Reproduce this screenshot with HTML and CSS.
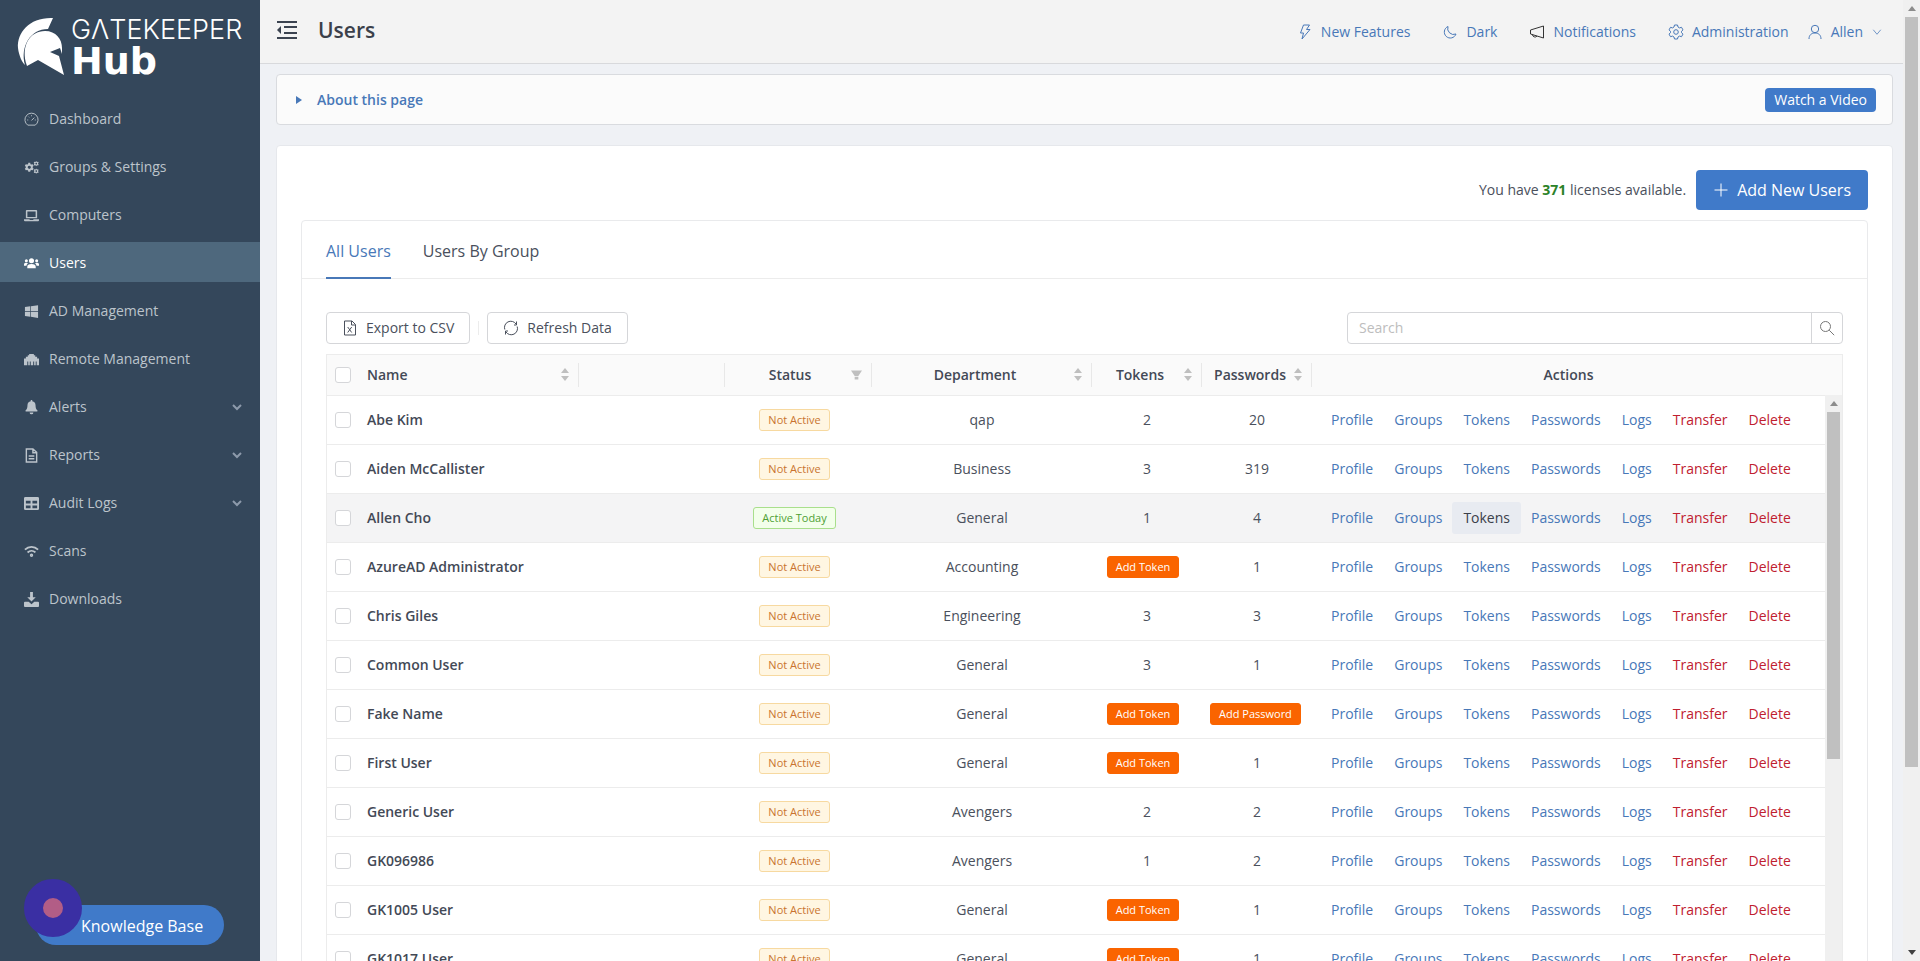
FILE: index.html
```html
<!DOCTYPE html>
<html lang="en">
<head>
    <meta charset="UTF-8">
    <meta name="viewport" content="width=device-width, initial-scale=1.0">
    <title>Users - GateKeeper Hub</title>
    <link rel="stylesheet" href="styles.css">
</head>
<body>
    <aside class="sidebar">
        <a href="#" class="logo" aria-label="GateKeeper Hub">
            <svg width="230" height="70" viewBox="0 0 230 70">
                <path fill="#fff" d="M35 0C12-1-1 14 0 30c1 8 4 14 7 17C2 29 12 11 30 11z"/>
                <path fill="#fff" d="M9 48C2 28 12 13 27 13c11 0 17 8 17 17v6l-2-6-10 4 9 4 5 19-26-15z"/>
                <text x="53" y="21" class="logo-top">GΛTEKEEPER</text>
                <text x="53" y="56" class="logo-bottom">Hub</text>
            </svg>
        </a>
        <nav>
            <ul class="menu">
                <li><a href="#"><svg viewBox="0 0 16 16" class="line"><path d="M4 14a7 7 0 1 1 8 0zM8 9l3-3M3.500 8.500h1M11.500 8.500h1M8 3.500v1M4.800 5l.7.7"/></svg>Dashboard</a></li>
                <li><a href="#"><svg viewBox="0 0 16 16"><path fill-rule="evenodd" d="M4.600 3h2l.3 1.400 1 .5L9.300 4.500l1 1.600-1 1v1.200l1 1-1 1.700-1.400-.4-1 .5-.3 1.500h-2l-.3-1.500-1-.5-1.400.4-1-1.700 1-1V7.100l-1-1 1-1.600 1.400.4 1-.5zM5.600 6.100a1.700 1.700 0 1 0 .1 0zM13 1l.8 1 1.300-.2.5 1-.8 1 .8 1-.5 1-1.300-.2-.8 1-.8-1-1.300.2-.5-1 .8-1-.8-1 .5-1 1.300.2zM13 3a.8.8 0 1 0 .1 0zM13 9l.8 1 1.300-.2.5 1-.8 1 .8 1-.5 1-1.300-.2-.8 1-.8-1-1.300.2-.5-1 .8-1-.8-1 .5-1 1.300.2zM13 11a.8.8 0 1 0 .1 0z"/></svg>Groups &amp; Settings</a></li>
                <li><a href="#"><svg viewBox="0 0 16 16"><path fill-rule="evenodd" d="M3 2h10a1 1 0 0 1 1 1v8H2V3a1 1 0 0 1 1-1zm.6 1.600v5.900h8.800V3.600zM0 12h6v.7h4V12h6v1a1 1 0 0 1-1 1H1a1 1 0 0 1-1-1z"/></svg>Computers</a></li>
                <li class="active"><a href="#"><svg viewBox="0 0 16 16"><circle cx="8" cy="5" r="2.700"/><circle cx="2.500" cy="5" r="1.600"/><circle cx="13.500" cy="5" r="1.600"/><path d="M3.500 13v-1.500C3.500 9.500 5 8.500 8 8.500s4.500 1 4.500 3V13zM0 10.500V9c0-1.200 1-1.700 2.500-1.700.8 0 1.400.2 1.700.5C3.200 8.600 2.700 9.500 2.600 10.500zM16 10.500V9c0-1.200-1-1.700-2.500-1.700-.8 0-1.400.2-1.700.5 1 .8 1.500 1.700 1.600 2.700z"/></svg>Users</a></li>
                <li><a href="#"><svg viewBox="0 0 16 16"><path d="M1 3.200l5.700-.8v5.200H1zM7.400 2.300L15 1.200v6.400H7.400zM1 8.400h5.700v5.200L1 12.800zM7.400 8.400H15v6.400l-7.600-1.100z"/></svg>AD Management</a></li>
                <li><a href="#"><svg viewBox="0 0 16 16"><path d="M0 14V7h2V5h2V3.500h1.500V2h5v1.500H12V5h2v2h2v7h-2.500v-4h-1v4h-1.700v-4h-1v4H7.200v-4h-1v4H4.500v-4h-1v4z"/></svg>Remote Management</a></li>
                <li><a href="#"><svg viewBox="0 0 16 16"><path d="M7.200 0h1.600v1.200C11 1.600 12.300 3.200 12.300 5.500c0 3 .7 4.300 1.900 5.300.5.500.2 1.400-.5 1.400H2.300c-.7 0-1-.9-.5-1.400 1.200-1 1.900-2.300 1.900-5.300C3.700 3.200 5 1.600 7.200 1.200zM6 13.300h4a2 2 0 0 1-4 0z"/></svg>Alerts<svg viewBox="0 0 12 12" class="chevron"><path d="M2 4l4 4 4-4"/></svg></a></li>
                <li><a href="#"><svg viewBox="0 0 16 16" class="line bold"><path d="M3.500 1h6L13.500 4.500V15h-11V1zM9.500 1v4h4M5 8.500h6M5 11.500h6"/></svg>Reports<svg viewBox="0 0 12 12" class="chevron"><path d="M2 4l4 4 4-4"/></svg></a></li>
                <li><a href="#"><svg viewBox="0 0 16 16"><path fill-rule="evenodd" d="M1.500 1h13A1.500 1.500 0 0 1 16 2.500v11a1.500 1.500 0 0 1-1.500 1.500h-13A1.500 1.500 0 0 1 0 13.500v-11A1.500 1.500 0 0 1 1.500 1zM2 5v3h5V5zm7 0v3h5V5zM2 10v3h5v-3zm7 0v3h5v-3z"/></svg>Audit Logs<svg viewBox="0 0 12 12" class="chevron"><path d="M2 4l4 4 4-4"/></svg></a></li>
                <li><a href="#"><svg viewBox="0 0 16 16" class="line heavy"><path d="M1 6c4-4 10-4 14 0M3.800 9c2.500-2.300 6-2.300 8.400 0"/><circle cx="8" cy="12" r=".8"/></svg>Scans</a></li>
                <li><a href="#"><svg viewBox="0 0 16 16"><path d="M6.500 0h3v5.500h3L8 10 3.500 5.500h3zM1 10.500h4L8 13l3-2.500h4a1 1 0 0 1 1 1V15a1 1 0 0 1-1 1H1a1 1 0 0 1-1-1v-3.500a1 1 0 0 1 1-1z"/></svg>Downloads</a></li>
            </ul>
        </nav>
        <div class="help">
            <button type="button" class="help-btn">Knowledge Base</button>
            <span class="help-beacon"></span>
        </div>
    </aside>

    <div class="main">
        <header class="topbar">
            <button type="button" class="collapse" aria-label="Collapse menu">
                <svg width="22" height="20" viewBox="0 0 22 20"><path stroke="#3b4350" stroke-width="2" d="M1 2h20M8 7h13M8 13h13M1 18h20"/><path fill="#3b4350" d="M5 6v8L1 10z"/></svg>
            </button>
            <h1>Users</h1>
            <div class="top-links">
                <a href="#"><svg viewBox="0 0 16 16" class="line"><path d="M6.500 1h6L9.500 5.500H13L5 15l1.500-6H3.500z"/></svg>New Features</a>
                <a href="#"><svg viewBox="0 0 16 16" class="line"><path d="M6 2.500a6 6 0 1 0 8 7.500A6 6 0 0 1 6 2.500z"/></svg>Dark</a>
                <a href="#"><svg viewBox="0 0 16 16" class="line dark"><path d="M1.500 6L14.500 2v12L1.500 10zM3.500 10.500a2.500 2.500 0 0 0 4.500 1.500"/></svg>Notifications</a>
                <a href="#"><svg viewBox="0 0 16 16" class="line"><path d="M6.500 1h3l.5 2 1.500.9 2-.6 1.500 2.600L13.500 7.300v1.400l1.500 1.400-1.500 2.600-2-.6-1.500.9-.5 2h-3L6 13l-1.500-.9-2 .6L1 10.100l1.500-1.400V7.300L1 5.900l1.500-2.600 2 .6L6 3z"/><circle cx="8" cy="8" r="2.300"/></svg>Administration</a>
                <a href="#" class="account"><svg viewBox="0 0 16 16" class="line"><circle cx="8" cy="5" r="3.700"/><path d="M2 15c0-4 2.500-6 6-6s6 2 6 6"/></svg>Allen<svg viewBox="0 0 16 16" class="line caret"><path d="M3 5l5 6 5-6"/></svg></a>
            </div>
        </header>

        <section class="about">
            <a href="#" class="about-link"><span class="triangle"></span>About this page</a>
            <button type="button" class="btn-video">Watch a Video</button>
        </section>

        <main class="card">
            <div class="licenses">
                <span>You have <strong>371</strong> licenses available.</span>
                <button type="button" class="btn-add"><svg viewBox="0 0 16 16" class="line"><path d="M8 1.500v13M1.500 8h13"/></svg>Add New Users</button>
            </div>
            <div class="panel">
                <div class="tabs">
                    <a href="#" class="tab active">All Users</a>
                    <a href="#" class="tab">Users By Group</a>
                </div>
                <div class="panel-body">
                    <div class="toolbar">
                        <button type="button" class="btn"><svg viewBox="0 0 16 16" class="line"><path d="M2.500 1h7.500l3.500 3.500V15h-11zM9.500 1v4h4M5.700 7l4 5.500M9.700 7l-4 5.500"/></svg>Export to CSV</button>
                        <span class="divider"></span>
                        <button type="button" class="btn"><svg viewBox="0 0 16 16" class="line"><path d="M1.800 9.500A6.300 6.300 0 0 1 13 4M14.200 6.500A6.300 6.300 0 0 1 3 12M13.500 1.500V5H11M2.500 14.500V11H5"/></svg>Refresh Data</button>
                        <div class="search">
                            <input type="text" placeholder="Search" aria-label="Search">
                            <button type="button" aria-label="Run search"><svg viewBox="0 0 16 16" class="line"><circle cx="6.500" cy="6.500" r="5"/><path d="M10.200 10.200l5 5"/></svg></button>
                        </div>
                    </div>
                    <div class="table-wrap">
                        <table>
                            <colgroup>
                                <col class="col-check"><col class="col-name"><col class="col-blank"><col class="col-status"><col class="col-dept"><col class="col-num"><col class="col-num"><col class="col-actions"><col class="col-scroll">
                            </colgroup>
                            <thead>
                                <tr>
                                    <th><input type="checkbox" aria-label="Select all"></th>
                                    <th class="name"><div class="head">Name<i class="sorter"></i></div></th>
                                    <th></th>
                                    <th><div class="head">Status<svg viewBox="0 0 12 12" class="filter"><path d="M0 1h12L8 7H4zM4 8h4v3H4z"/></svg></div></th>
                                    <th><div class="head">Department<i class="sorter"></i></div></th>
                                    <th><div class="head">Tokens<i class="sorter"></i></div></th>
                                    <th><div class="head">Passwords<i class="sorter"></i></div></th>
                                    <th>Actions</th>
                                    <th></th>
                                </tr>
                            </thead>
                            <tbody id="users"></tbody>
                        </table>
                        <div class="scrollbar inner"><span class="up"></span><span class="thumb"></span></div>
                    </div>
                </div>
            </div>
        </main>
    </div>
    <div class="scrollbar page"><span class="up"></span><span class="thumb"></span><span class="down"></span></div>

    <script src="users.js"></script>
</body>
</html>
```
FILE: users.js
```js
// name, department, tokens, passwords
const users = [
    ['Abe Kim', 'qap', 2, 20],
    ['Aiden McCallister', 'Business', 3, 319],
    ['Allen Cho', 'General', 1, 4],
    ['AzureAD Administrator', 'Accounting', 0, 1],
    ['Chris Giles', 'Engineering', 3, 3],
    ['Common User', 'General', 3, 1],
    ['Fake Name', 'General', 0, 0],
    ['First User', 'General', 0, 1],
    ['Generic User', 'Avengers', 2, 2],
    ['GK096986', 'Avengers', 1, 2],
    ['GK1005 User', 'General', 0, 1],
    ['GK1017 User', 'General', 0, 1]
];
const actions = ['Profile', 'Groups', 'Tokens', 'Passwords', 'Logs', 'Transfer', 'Delete'];
const hovered = 'Allen Cho';

document.getElementById('users').innerHTML = users.map(([name, dept, tokens, passwords]) => {
    const active = name === hovered;
    const links = actions.map(action => {
        const danger = action === 'Transfer' || action === 'Delete' ? ' danger' : '';
        const hover = active && action === 'Tokens' ? ' hover' : '';
        return `<button type="button" class="action${danger}${hover}">${action}</button>`;
    }).join('');

    return `<tr class="${active ? 'hover' : ''}">
        <td><input type="checkbox" aria-label="Select ${name}"></td>
        <td class="name">${name}</td>
        <td></td>
        <td><span class="tag ${active ? 'green' : 'gold'}">${active ? 'Active Today' : 'Not Active'}</span></td>
        <td>${dept}</td>
        <td>${tokens || '<button type="button" class="tag orange">Add Token</button>'}</td>
        <td>${passwords || '<button type="button" class="tag orange">Add Password</button>'}</td>
        <td><div class="actions">${links}</div></td>
        <td></td>
    </tr>`;
}).join('');
```
FILE: styles.css
```css
* {
    margin: 0;
    padding: 0;
    box-sizing: border-box;
}

body {
    font-family: 'Open Sans', 'Noto Sans', sans-serif;
    font-size: 14px;
    line-height: 22px;
    color: #4a505c;
    background: #eff1f5;
    display: flex;
    height: 100vh;
    overflow: hidden;
}

a {
    color: #4878b8;
    text-decoration: none;
}

button,
input {
    font: inherit;
    color: inherit;
}

button {
    border: none;
    background: none;
    cursor: pointer;
    white-space: nowrap;
}

svg {
    flex: none;
    fill: currentColor;
}

svg.line {
    fill: none;
    stroke: currentColor;
    stroke-width: 1;
}

svg.bold {
    stroke-width: 1.5;
}

svg.heavy {
    stroke-width: 2;
}

/* Sidebar */
.sidebar {
    position: relative;
    flex: none;
    width: 260px;
    background: #34475b;
}

.logo {
    display: block;
    height: 98px;
    padding: 18px 0 0 18px;
}

.logo svg {
    overflow: visible;
}

.logo-top {
    font-family: Inter, sans-serif;
    font-size: 27px;
    font-weight: 300;
    fill: #fff;
}

.logo-bottom {
    font-family: 'DejaVu Sans', sans-serif;
    font-size: 38px;
    font-weight: 700;
    fill: #fff;
}

.menu {
    list-style: none;
}

.menu li {
    margin-bottom: 8px;
}

.menu a {
    display: flex;
    align-items: center;
    gap: 10px;
    height: 40px;
    padding: 2px 17px 0 24px;
    color: #bcc4cb;
}

.menu svg {
    width: 15px;
    height: 15px;
}

.menu .active a {
    background: #4e687d;
    color: #fff;
}

.menu .chevron {
    width: 12px;
    height: 12px;
    margin-left: auto;
    fill: none;
    stroke: #8d9aab;
    stroke-width: 2;
}

.help {
    position: absolute;
    left: 24px;
    bottom: 16px;
}

.help-btn {
    height: 40px;
    margin-left: 12px;
    padding: 2px 21px 0 45px;
    border-radius: 20px;
    background: #407ac9;
    color: #fff;
    font-size: 16px;
}

.help-beacon {
    position: absolute;
    left: 0;
    bottom: 8px;
    width: 58px;
    height: 58px;
    border: 19px solid #3a2fa3;
    border-radius: 50%;
    background: #b25d86;
}

/* Top bar */
.main {
    flex: 1;
    min-width: 0;
    overflow: hidden;
}

.topbar {
    display: flex;
    align-items: center;
    height: 64px;
    padding: 0 20px 4px 16px;
    background: #f3f3f3;
    border-bottom: 1px solid #d8d9dc;
}

.collapse {
    display: flex;
    margin-right: 20px;
}

.topbar h1 {
    font-size: 21px;
    font-weight: 600;
    color: #3b404a;
}

.top-links {
    display: flex;
    gap: 32px;
    margin-left: auto;
    padding-top: 4px;
}

.top-links a {
    display: flex;
    align-items: center;
    gap: 8px;
}

.top-links svg {
    width: 16px;
    height: 16px;
}

.top-links .account {
    margin-left: -14px;
}

.top-links .caret {
    width: 12px;
    height: 12px;
}

.top-links .dark {
    color: #333;
}

/* About banner */
.about {
    display: flex;
    align-items: center;
    justify-content: space-between;
    height: 51px;
    margin: 10px 10px 20px 16px;
    padding: 0 16px 0 19px;
    background: #fbfbfb;
    border: 1px solid #d9dbdf;
    border-radius: 4px;
}

.about-link {
    display: flex;
    align-items: center;
    gap: 15px;
    font-weight: 600;
}

.triangle {
    border: 4px solid transparent;
    border-left: 6px solid #4878b8;
    border-right: 0;
}

.btn-video {
    height: 24px;
    padding: 0 9px;
    border-radius: 4px;
    background: #407ac9;
    color: #fff;
}

/* Users card */
.card {
    margin: 0 10px 0 16px;
    padding: 24px;
    background: #fff;
    border: 1px solid #e6e8ec;
    border-radius: 4px;
}

.licenses {
    display: flex;
    align-items: center;
    justify-content: flex-end;
    gap: 10px;
    margin-bottom: 10px;
}

.licenses strong {
    color: #2b8228;
}

.btn-add {
    display: flex;
    align-items: center;
    gap: 8px;
    height: 40px;
    padding: 0 17px;
    border-radius: 4px;
    background: #407ac9;
    color: #fff;
    font-size: 16px;
}

.btn-add svg {
    width: 16px;
    height: 16px;
}

.panel {
    border: 1px solid #e9eaec;
    border-radius: 4px;
}

.tabs {
    display: flex;
    gap: 32px;
    height: 58px;
    padding: 0 24px;
    border-bottom: 1px solid #ececec;
}

.tab {
    height: 58px;
    padding-top: 19px;
    color: #4a505c;
    font-size: 16px;
}

.tab.active {
    color: #4878b8;
    border-bottom: 2px solid #4878b8;
}

.panel-body {
    padding: 33px 24px 24px;
}

.toolbar {
    display: flex;
    align-items: center;
    margin-bottom: 10px;
}

.btn {
    display: flex;
    align-items: center;
    gap: 8px;
    height: 32px;
    padding: 0 15px;
    border: 1px solid #d5d6d9;
    border-radius: 4px;
    background: #fff;
}

.btn svg {
    width: 16px;
    height: 16px;
}

.divider {
    width: 1px;
    height: 14px;
    margin: 0 8px;
    background: #ececec;
}

.search {
    display: flex;
    width: 496px;
    height: 32px;
    margin-left: auto;
    border: 1px solid #d5d6d9;
    border-radius: 4px;
}

.search input {
    flex: 1;
    padding: 0 11px;
    border: none;
    background: none;
    outline: none;
}

.search input::placeholder {
    color: #bdbdbd;
}

.search button {
    display: flex;
    align-items: center;
    justify-content: center;
    width: 31px;
    border-left: 1px solid #d5d6d9;
    color: #777;
}

.search svg {
    width: 16px;
    height: 16px;
}

/* Table */
.table-wrap {
    position: relative;
    border: 1px solid #ececec;
    border-bottom: none;
}

table {
    width: 100%;
    table-layout: fixed;
    border-collapse: collapse;
}

.col-check {
    width: 32px;
}

.col-blank {
    width: 146px;
}

.col-status {
    width: 147px;
}

.col-dept {
    width: 220px;
}

.col-num {
    width: 110px;
}

.col-actions {
    width: 513px;
}

.col-scroll {
    width: 17px;
}

th,
td {
    padding: 0 8px;
    border-bottom: 1px solid #ececec;
    text-align: center;
    white-space: nowrap;
}

th {
    position: relative;
    height: 40px;
    background: #fafafa;
    color: #434956;
    font-weight: 600;
}

th:nth-child(n+2):nth-child(-n+7) {
    padding-right: 10px;
}

th:nth-child(n+2):nth-child(-n+7)::after {
    content: '';
    position: absolute;
    top: 8px;
    right: 0;
    width: 1px;
    height: 24px;
    background: #e8e8e8;
}

td {
    height: 49px;
}

td.name {
    color: #434956;
    font-weight: 600;
}

.name {
    text-align: left;
}

th:first-child,
td:first-child,
th:last-child,
td:last-child {
    padding: 0;
}

tr.hover td {
    background: #f4f4f5;
}

.head {
    display: flex;
    align-items: center;
    justify-content: center;
}

.name .head {
    justify-content: space-between;
}

.head .sorter,
.head .filter {
    margin-left: auto;
    padding-left: 4px;
}

th:not(.name) .head::before {
    content: '';
    margin-right: auto;
}

.sorter {
    display: flex;
    flex-direction: column;
    gap: 3px;
}

.sorter::before,
.sorter::after {
    content: '';
    border: 4px solid transparent;
}

.sorter::before {
    border-bottom: 5px solid #bfbfbf;
    border-top: 0;
}

.sorter::after {
    border-top: 5px solid #bfbfbf;
    border-bottom: 0;
}

.filter {
    width: 15px;
    height: 12px;
    fill: #bfbfbf;
}

input[type="checkbox"] {
    display: block;
    width: 16px;
    height: 16px;
    margin: 0 auto;
    appearance: none;
    border: 1px solid #d5d6d9;
    border-radius: 3px;
    background: #fff;
}

.tag {
    display: inline-block;
    height: 22px;
    margin-right: 8px;
    padding: 0 8px;
    border: 1px solid;
    border-radius: 3px;
    font-size: 11px;
    line-height: 20px;
    vertical-align: middle;
}

.tag.gold {
    background: #fff6e2;
    border-color: #f7d9a0;
    color: #c9742f;
}

.tag.green {
    background: #f3ffeb;
    border-color: #a9df8c;
    color: #4f9f35;
}

.tag.orange {
    background: #fa6400;
    border-color: #fa6400;
    color: #fff;
}

.actions {
    display: flex;
}

.action {
    height: 32px;
    padding: 0 11px;
    border-radius: 3px;
    color: #4878b8;
}

.action + .action {
    margin-left: -1px;
}

.action.danger {
    color: #c02030;
}

.action.hover {
    background: #e8ebf1;
    color: #3b404a;
}

/* Scrollbars */
.scrollbar {
    display: flex;
    flex-direction: column;
    align-items: center;
    width: 17px;
    background: #f0f0f0;
}

.scrollbar .thumb {
    width: 13px;
    background: #c0c0c0;
}

.scrollbar .up {
    margin: 6px 0;
    border: 4px solid transparent;
    border-top: 0;
    border-bottom: 5px solid #8c8c8c;
}

.scrollbar .down {
    margin: auto 0 6px;
    border: 4px solid transparent;
    border-bottom: 0;
    border-top: 5px solid #404040;
}

.scrollbar.page {
    flex: none;
}

.scrollbar.page .thumb {
    height: 78%;
}

.scrollbar.inner {
    position: absolute;
    top: 40px;
    right: 0;
    bottom: 0;
}

.scrollbar.inner .thumb {
    height: 59%;
}
```
